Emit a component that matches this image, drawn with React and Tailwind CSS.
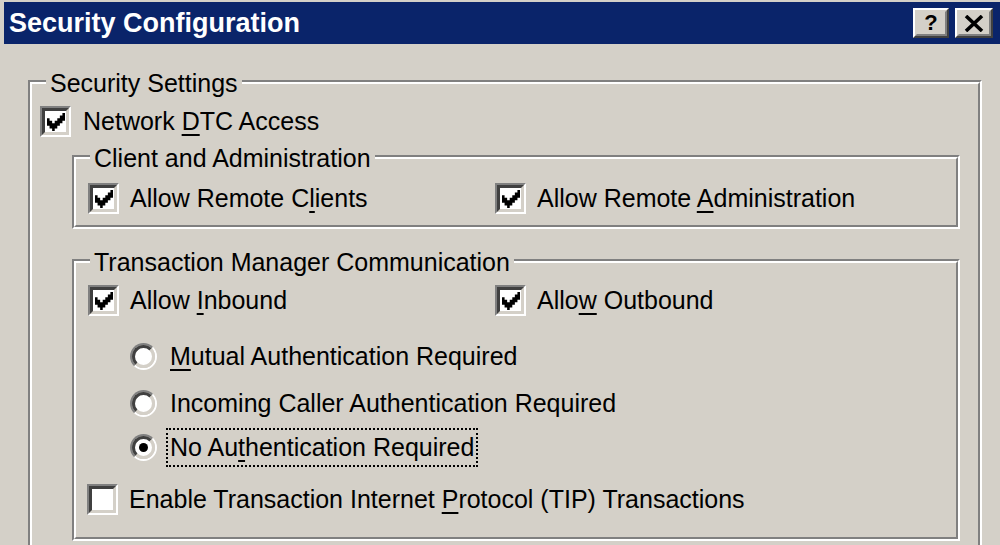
import React from "react";

const FONT = "font-['Liberation_Sans',Arial,sans-serif]";

function Check() {
  return (
    <svg width="18" height="18" viewBox="0 0 7 7">
      <path
        d="M0 2V5H1V6H2V7H3V6H4V5H5V4H6V3H7V0H6V1H5V2H4V3H3V4H2V3H1V2Z"
        fill="#000"
      />
    </svg>
  );
}

function Box({ checked }) {
  return (
    <span className="flex w-[31px] h-[31px] shrink-0 border-2 border-t-[#808080] border-l-[#808080] border-b-white border-r-white">
      <span className="flex flex-1 items-center justify-center bg-white border-[3px] border-t-[#404040] border-l-[#404040] border-b-[#d4d0c8] border-r-[#d4d0c8]">
        {checked && <Check />}
      </span>
    </span>
  );
}

function Radio({ checked }) {
  return (
    <span className="flex w-[27px] h-[27px] shrink-0 rounded-full border-2 border-t-[#808080] border-l-[#808080] border-b-white border-r-white">
      <span className="flex flex-1 items-center justify-center rounded-full bg-white border-[3px] border-t-[#404040] border-l-[#404040] border-b-[#d4d0c8] border-r-[#d4d0c8]">
        {checked && <span className="block w-[9px] h-[9px] rounded-full bg-black" />}
      </span>
    </span>
  );
}

function U({ children }) {
  return <span className="underline decoration-2 underline-offset-[4px]">{children}</span>;
}

function Group({ legend, className, children }) {
  return (
    <div className={"relative border-2 border-t-[#808080] border-l-[#808080] border-b-white border-r-white " + className}>
      <div className="h-full border-2 border-t-white border-l-white border-b-[#808080] border-r-[#808080]">
        {children}
      </div>
      <span className="absolute left-[16px] top-[-14px] h-[30px] px-[4px] bg-[#d4d0c8] leading-[30px] whitespace-nowrap">
        {legend}
      </span>
    </div>
  );
}

export default function App() {
  return (
    <div className={"w-[1000px] h-[545px] overflow-hidden bg-[#d4d0c8] text-black text-[25px] pt-[2px] pl-[4px] " + FONT}>
      {/* Title bar */}
      <div className="flex h-[42px] items-center bg-[#0a246a] pl-[5px] pr-[7px]">
        <span className="text-white font-bold text-[27px] leading-none">Security Configuration</span>
        <div className="ml-auto flex gap-[6px]">
          <div className="flex w-[36px] h-[30px] border-2 border-t-white border-l-white border-b-[#404040] border-r-[#404040]">
            <div className="flex flex-1 items-center justify-center bg-[#d4d0c8] border-2 border-t-[#d4d0c8] border-l-[#d4d0c8] border-b-[#808080] border-r-[#808080]">
              <span className="font-bold text-[22px] leading-none">?</span>
            </div>
          </div>
          <div className="flex w-[38px] h-[30px] border-2 border-t-white border-l-white border-b-[#404040] border-r-[#404040]">
            <div className="flex flex-1 items-center justify-center bg-[#d4d0c8] border-2 border-t-[#d4d0c8] border-l-[#d4d0c8] border-b-[#808080] border-r-[#808080]">
              <svg width="20" height="17" viewBox="0 0 20 17">
                <path d="M2 1L18 16M18 1L2 16" stroke="#000" strokeWidth="3.6" />
              </svg>
            </div>
          </div>
        </div>
      </div>

      {/* Security Settings group */}
      <Group legend="Security Settings" className="mt-[36px] ml-[24px] w-[954px] h-[500px]">
        <div className="flex items-center gap-[12px] ml-[8px] mt-[22px] h-[31px]">
          <Box checked />
          <span>Network <U>D</U>TC Access</span>
        </div>

        <Group legend="Client and Administration" className="ml-[40px] mt-[18px] w-[888px] h-[74px]">
          <div className="flex items-center ml-[12px] mt-[24px] h-[31px]">
            <div className="flex items-center gap-[11px] w-[407px]">
              <Box checked />
              <span>Allow Remote C<U>l</U>ients</span>
            </div>
            <div className="flex items-center gap-[11px]">
              <Box checked />
              <span>Allow Remote <U>A</U>dministration</span>
            </div>
          </div>
        </Group>

        <Group legend="Transaction Manager Communication" className="ml-[40px] mt-[30px] w-[888px] h-[282px]">
          <div className="flex items-center ml-[12px] mt-[22px] h-[31px]">
            <div className="flex items-center gap-[11px] w-[407px]">
              <Box checked />
              <span>Allow <U>I</U>nbound</span>
            </div>
            <div className="flex items-center gap-[11px]">
              <Box checked />
              <span>Allo<U>w</U> Outbound</span>
            </div>
          </div>

          <div className="flex flex-col ml-[54px] mt-[20px]">
            <div className="flex items-center h-[40px] gap-[9px]">
              <Radio />
              <span className="border-2 border-transparent px-[2px] leading-[35px]"><U>M</U>utual Authentication Required</span>
            </div>
            <div className="flex items-center h-[40px] gap-[9px] mt-[7px]">
              <Radio />
              <span className="border-2 border-transparent px-[2px] leading-[35px]">Incoming Caller Authentication Required</span>
            </div>
            <div className="flex items-center h-[40px] gap-[9px] mt-[4px]">
              <Radio checked />
              <span className="border-2 border-dotted border-black px-[2px] leading-[35px]">No Au<U>t</U>hentication Required</span>
            </div>
          </div>

          <div className="flex items-center gap-[11px] ml-[11px] mt-[17px] h-[31px]">
            <Box />
            <span>Enable Transaction Internet <U>P</U>rotocol (TIP) Transactions</span>
          </div>
        </Group>
      </Group>
    </div>
  );
}
